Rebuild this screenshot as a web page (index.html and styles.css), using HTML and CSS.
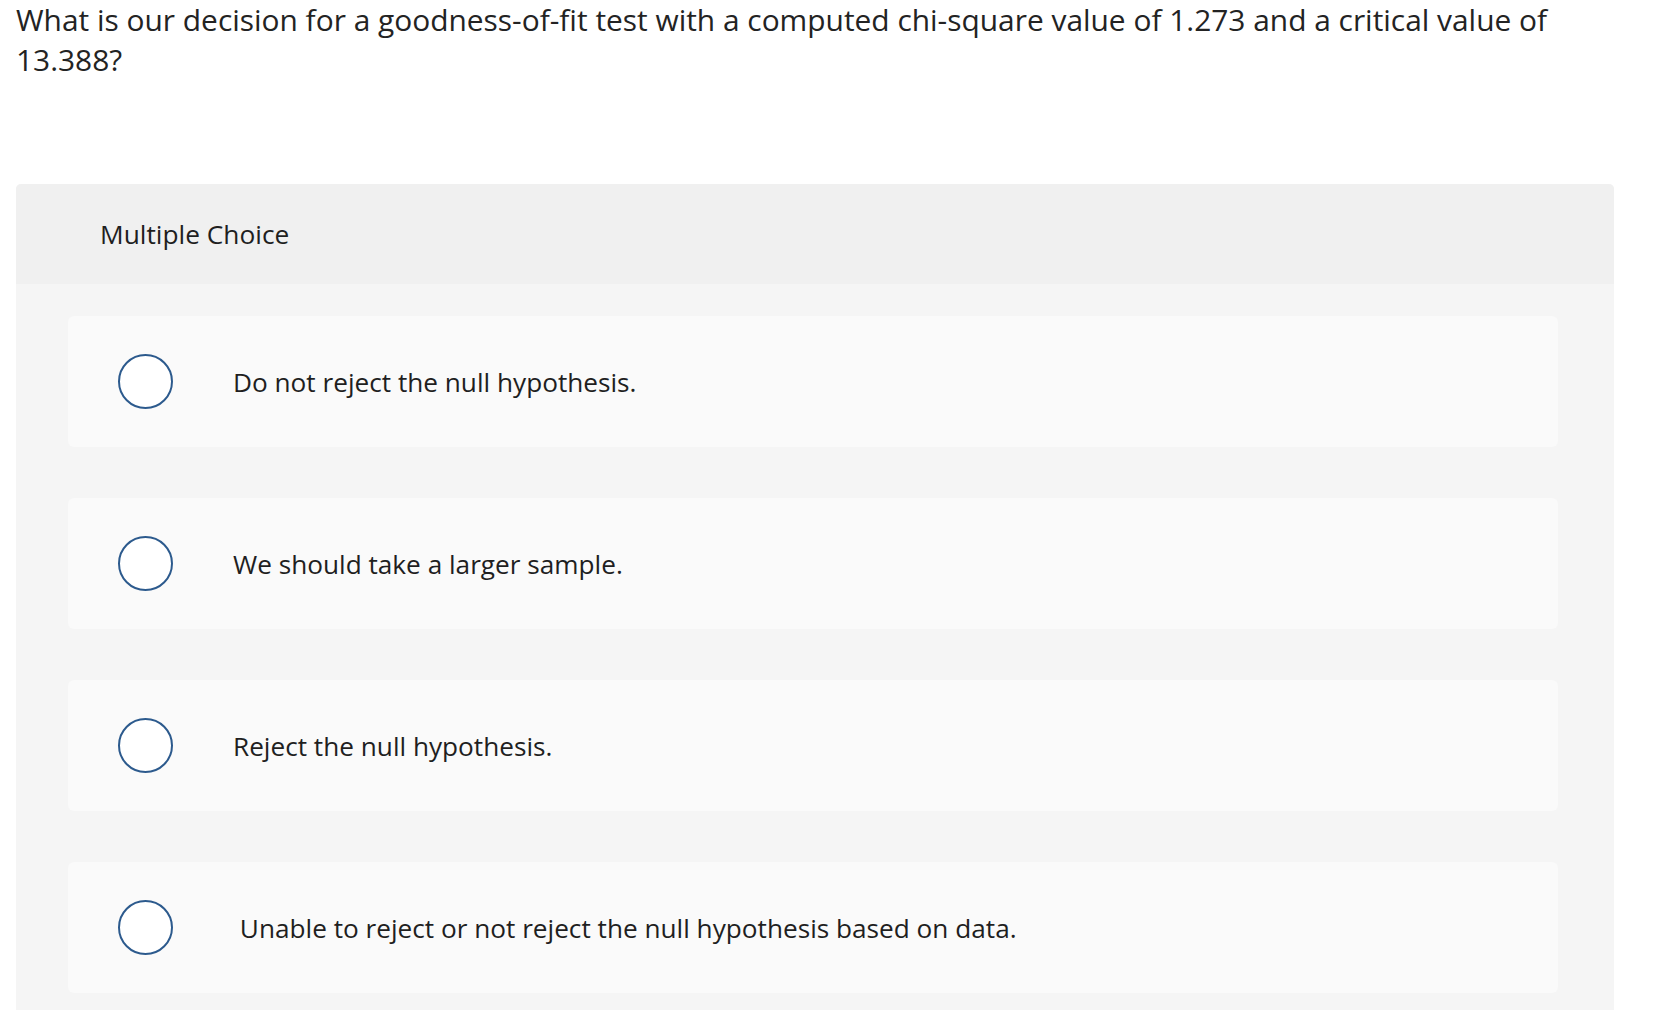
FILE: index.html
```html
<!DOCTYPE html>
<html lang="en">
<head>
<meta charset="utf-8">
<title>Multiple Choice</title>
<link rel="stylesheet" href="styles.css">
</head>
<body>
<main class="page">
  <p class="question">What is our decision for a goodness-of-fit test with a computed chi-square value of 1.273 and a critical value of 13.388?</p>
  <section class="panel">
    <header class="panel-header">Multiple Choice</header>
    <div class="choices">
      <label class="choice"><span class="radio"></span><span class="choice-text">Do not reject the null hypothesis.</span></label>
      <label class="choice"><span class="radio"></span><span class="choice-text">We should take a larger sample.</span></label>
      <label class="choice"><span class="radio"></span><span class="choice-text">Reject the null hypothesis.</span></label>
      <label class="choice"><span class="radio"></span><span class="choice-text">&nbsp;Unable to reject or not reject the null hypothesis based on data.</span></label>
    </div>
  </section>
</main>
</body>
</html>
```
FILE: styles.css
```css
html, body {
  margin: 0;
  padding: 0;
  background: #ffffff;
}

body {
  font-family: "Open Sans", "Noto Sans", sans-serif;
  color: #222222;
}

.page {
  padding: 0 40px 0 16px;
}

.question {
  margin: 0;
  font-size: 29.9px;
  line-height: 40px;
  color: #232323;
}

.panel {
  margin-top: 104px;
  background: #f5f5f5;
  border-radius: 5px 5px 0 0;
  overflow: hidden;
}

.panel-header {
  height: 100px;
  display: flex;
  align-items: center;
  padding-left: 84px;
  background: #f0f0f0;
  font-size: 26.3px;
  color: #1f1f1f;
}

.choices {
  display: flex;
  flex-direction: column;
  gap: 51px;
  padding: 32px 56px 40px 52px;
}

.choice {
  height: 131px;
  display: flex;
  align-items: center;
  background: #fafafa;
  border-radius: 6px;
  padding-left: 50px;
}

.radio {
  flex: none;
  width: 55px;
  height: 55px;
  box-sizing: border-box;
  border: 2px solid #2c5a8d;
  border-radius: 50%;
  background: #ffffff;
}

.choice-text {
  margin-left: 60px;
  font-size: 26.2px;
  color: #1f1f1f;
}
```
